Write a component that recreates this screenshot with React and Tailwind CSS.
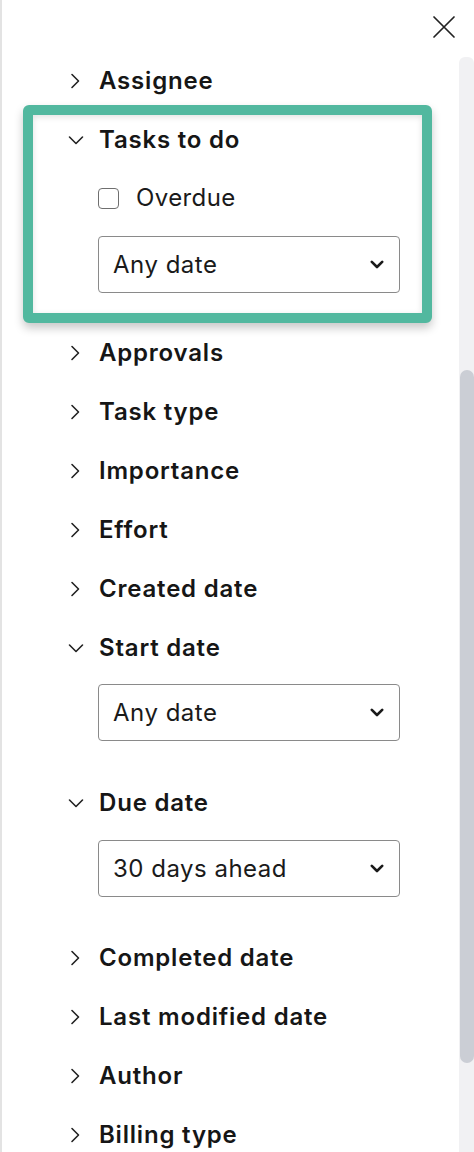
import React from "react";

const font = { fontFamily: "Inter, 'Noto Sans', 'Liberation Sans', sans-serif" };

function ChevronRight() {
  return (
    <svg width="10" height="16" viewBox="0 0 10 16" className="text-[#222]">
      <path d="M2 1.5 L8.5 8 L2 14.5" fill="none" stroke="currentColor" strokeWidth="1.6" strokeLinecap="round" strokeLinejoin="round" />
    </svg>
  );
}

function ChevronDown() {
  return (
    <svg width="16" height="10" viewBox="0 0 16 10" className="text-[#222]">
      <path d="M1.5 2 L8 8.5 L14.5 2" fill="none" stroke="currentColor" strokeWidth="1.6" strokeLinecap="round" strokeLinejoin="round" />
    </svg>
  );
}

function Row({ label, open, className = "" }) {
  return (
    <div className={`flex items-center ${className}`}>
      <div className="w-[31px] flex items-center">
        {open ? <ChevronDown /> : <div className="pl-[2px] flex"><ChevronRight /></div>}
      </div>
      <span className="text-[24px] font-semibold text-[#161616] tracking-[0.8px]">{label}</span>
    </div>
  );
}

function Select({ value, className = "" }) {
  return (
    <div className={`ml-[30px] w-[302px] h-[57px] border-[1.5px] border-[#8a8a8a] rounded-[4px] flex items-center justify-between pl-[14px] pr-[15px] ${className}`}>
      <span className="text-[24px] text-[#1a1a1a] tracking-[0.5px]">{value}</span>
      <svg width="14" height="9" viewBox="0 0 14 9">
        <path d="M1.8 1.8 L7 7 L12.2 1.8" fill="none" stroke="#1a1a1a" strokeWidth="2.6" strokeLinecap="round" strokeLinejoin="round" />
      </svg>
    </div>
  );
}

export default function App() {
  return (
    <div style={font} className="relative w-[474px] h-[1152px] overflow-hidden bg-white border-l-2 border-[#e3e3e3]">
      {/* header */}
      <div className="h-[51px] flex justify-end pr-[18px] pt-[15px]">
        <svg width="24" height="24" viewBox="0 0 24 24">
          <path d="M2 2 L22 22 M22 2 L2 22" stroke="#222" strokeWidth="1.7" strokeLinecap="round" />
        </svg>
      </div>

      {/* scrollbar */}
      <div className="absolute right-0 top-[57px] bottom-0 w-[15px] bg-[#f1f1f3] rounded-t-[6px]">
        <div className="mt-[313px] h-[693px] w-[14px] ml-[1px] rounded-full bg-[#cbced5]"></div>
      </div>

      <div className="pl-[66px]">
        <Row label="Assignee" className="h-[59px]" />
      </div>

      {/* highlighted section */}
      <div className="ml-[21px] mt-[-5px] w-[409px] border-[10px] border-[#52b89f] rounded-[6px] pl-[35px] pb-[20px] bg-white shadow-[0_5px_10px_rgba(0,0,0,0.22),inset_0_2px_6px_rgba(0,0,0,0.12)]">
        <Row label="Tasks to do" open className="h-[50px]" />
        <div className="mt-[8px] h-[50px] flex items-center pl-[30px]">
          <div className="w-[21px] h-[21px] border-[1.5px] border-[#6f6f6f] rounded-[4px]"></div>
          <span className="ml-[17px] text-[24px] text-[#1a1a1a] tracking-[0.4px]">Overdue</span>
        </div>
        <div className="mt-[13px]">
          <Select value="Any date" />
        </div>
      </div>

      <div className="pl-[66px]">
        <Row label="Approvals" className="h-[59px]" />
        <Row label="Task type" className="h-[59px]" />
        <Row label="Importance" className="h-[59px]" />
        <Row label="Effort" className="h-[59px]" />
        <Row label="Created date" className="h-[59px]" />
        <Row label="Start date" open className="h-[59px]" />
        <Select value="Any date" className="mt-[7px]" />
        <Row label="Due date" open className="h-[59px] mt-[32px]" />
        <Select value="30 days ahead" className="mt-[8px]" />
        <Row label="Completed date" className="h-[59px] mt-[31px]" />
        <Row label="Last modified date" className="h-[59px]" />
        <Row label="Author" className="h-[59px]" />
        <Row label="Billing type" className="h-[59px]" />
      </div>
    </div>
  );
}
